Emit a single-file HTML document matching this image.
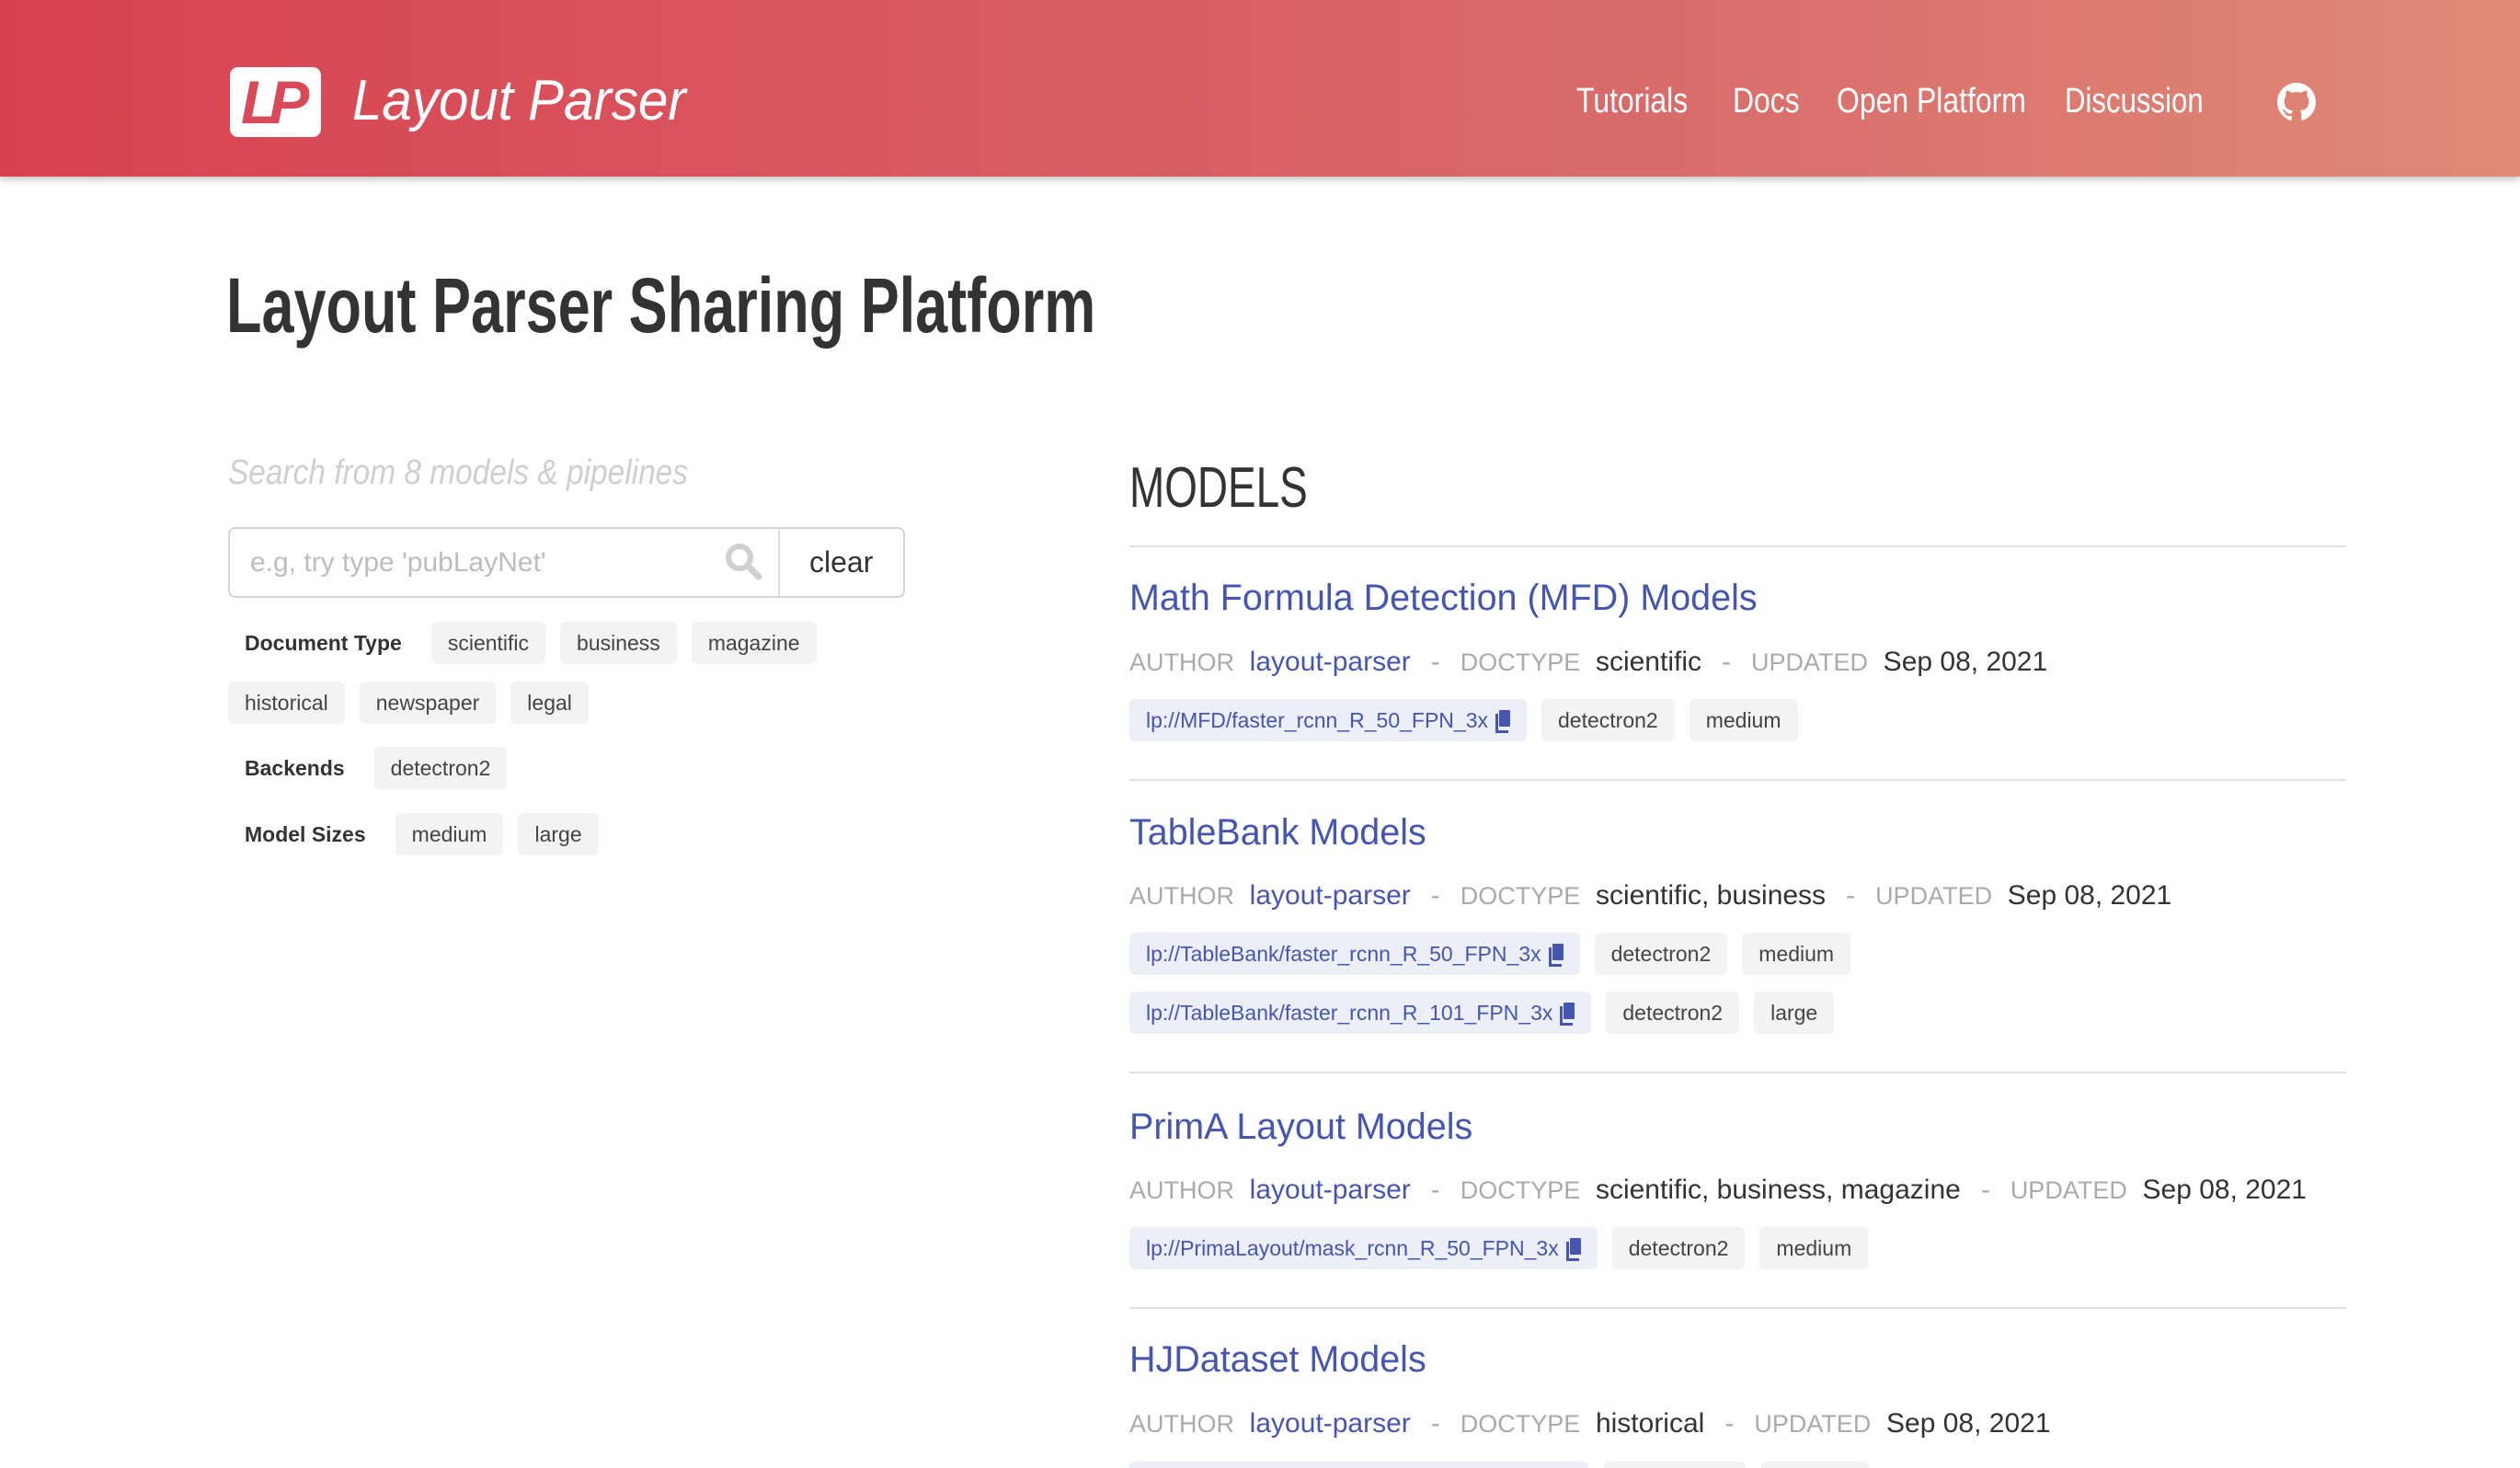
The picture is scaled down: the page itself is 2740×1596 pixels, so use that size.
<!DOCTYPE html>
<html><head><meta charset="utf-8">
<style>
*{margin:0;padding:0;box-sizing:border-box}
html,body{width:2740px;height:1596px;overflow:hidden;background:#fff;font-family:"Liberation Sans",sans-serif;position:relative}
.a{position:absolute;white-space:nowrap}
.hdr{position:absolute;left:0;top:0;width:2740px;height:192px;background:linear-gradient(90deg,#d7424f 0%,#d9525b 25%,#d86b6a 65%,#e08a77 100%);box-shadow:0 3px 8px rgba(0,0,0,.25)}
.sx{display:inline-block;transform-origin:0 50%}
.nav{color:#fff;font-size:38px;line-height:44px;top:88px}
.pill{display:inline-flex;align-items:center;height:46px;padding:0 18px;background:#f3f3f3;border-radius:6px;color:#444;font-size:23px;margin-right:16px}
.row{position:absolute;display:flex;align-items:center;white-space:nowrap}
.lbl{font-weight:bold;font-size:23px;color:#333;margin-left:18px;margin-right:32px}
.title{color:#4656b0;font-size:39.5px;line-height:46px}
.meta{font-size:30px;line-height:36px;color:#333}
.meta .k{color:#aaa;font-size:27px}
.meta .b{color:#4656b0}
.meta .d{color:#aaa;margin:0 22px}
.bp{background:#eceff8;color:#4656b0}
.cp{display:inline-block;width:16px;height:22px;margin-left:8px;position:relative}
.cp:before{content:"";position:absolute;left:0;top:4px;width:11px;height:18px;border:3px solid #4656b0;border-right:none;border-top:none}
.cp:after{content:"";position:absolute;left:4px;top:0;width:12px;height:18px;background:#4656b0;border-radius:1px}
.hr{position:absolute;left:1228px;width:1323px;height:2px;background:#e2e2e2}
</style></head><body>
<div class="hdr"></div>
<div class="a" style="left:250px;top:73px;width:99px;height:76px;background:#fff;border-radius:9px"></div>
<div class="a" style="left:262px;top:78px;font:italic bold 66px/66px 'Liberation Sans',sans-serif;color:#d8495a;letter-spacing:-10px">LP</div>
<div class="a" style="left:383px;top:72px;font:italic 62px/76px 'Liberation Sans',sans-serif;color:#fff"><span class="sx" style="transform:scaleX(.94)">Layout Parser</span></div>
<div class="a nav" style="left:1714px"><span class="sx" style="transform:scaleX(.84)">Tutorials</span></div>
<div class="a nav" style="left:1884px"><span class="sx" style="transform:scaleX(.84)">Docs</span></div>
<div class="a nav" style="left:1997px"><span class="sx" style="transform:scaleX(.84)">Open Platform</span></div>
<div class="a nav" style="left:2245px"><span class="sx" style="transform:scaleX(.82)">Discussion</span></div>
<svg class="a" style="left:2476px;top:90px" width="42" height="42" viewBox="0 0 16 16"><path fill="#fff" d="M8 0C3.58 0 0 3.58 0 8c0 3.54 2.29 6.53 5.47 7.590.4.07.55-.17.55-.38 0-.19-.01-.82-.01-1.49-2.01.37-2.53-.49-2.69-.94-.09-.23-.48-.94-.82-1.13-.28-.15-.68-.52-.01-.53.63-.01 1.08.58 1.23.82.72 1.21 1.87.87 2.33.66.07-.52.28-.87.51-1.07-1.78-.2-3.64-.89-3.64-3.95 0-.87.31-1.59.82-2.15-.08-.2-.36-1.02.08-2.12 0 0 .67-.21 2.2.82.64-.18 1.32-.27 2-.27.68 0 1.36.09 2 .27 1.53-1.04 2.2-.82 2.2-.82.44 1.1.16 1.92.08 2.12.51.56.82 1.27.82 2.15 0 3.07-1.87 3.75-3.65 3.95.29.25.54.73.54 1.48 0 1.07-.01 1.93-.01 2.2 0 .21.15.46.55.38A8.013 8.013 0 0016 8c0-4.42-3.58-8-8-8z"/></svg>

<div class="a" style="left:246px;top:284px;font:bold 84px/96px 'Liberation Sans',sans-serif;color:#333"><span class="sx" style="transform:scaleX(.75)">Layout Parser Sharing Platform</span></div>

<div class="a" style="left:248px;top:490px;font:italic 38px/48px 'Liberation Sans',sans-serif;color:#cfcfcf"><span class="sx" style="transform:scaleX(.88)">Search from 8 models &amp; pipelines</span></div>
<div class="a" style="left:248px;top:573px;width:736px;height:77px;border:2px solid #d4d4d4;border-radius:8px"></div>
<div class="a" style="left:846px;top:574px;width:2px;height:75px;background:#ddd"></div>
<div class="a" style="left:272px;top:594px;font-size:30px;line-height:36px;color:#bdbdbd">e.g, try type 'pubLayNet'</div>
<svg class="a" style="left:787px;top:589px" width="44" height="44" viewBox="0 0 44 44"><circle cx="17" cy="17" r="12" fill="none" stroke="#d0d0d0" stroke-width="6"/><path d="M26 26L38 38" stroke="#d0d0d0" stroke-width="7" stroke-linecap="round"/></svg>
<div class="a" style="left:880px;top:592px;font-size:32px;line-height:38px;color:#333">clear</div>

<div class="row" style="left:248px;top:676px"><span class="lbl">Document Type</span><span class="pill">scientific</span><span class="pill">business</span><span class="pill">magazine</span></div>
<div class="row" style="left:248px;top:741px"><span class="pill">historical</span><span class="pill">newspaper</span><span class="pill">legal</span></div>
<div class="row" style="left:248px;top:812px"><span class="lbl">Backends</span><span class="pill">detectron2</span></div>
<div class="row" style="left:248px;top:884px"><span class="lbl">Model Sizes</span><span class="pill">medium</span><span class="pill">large</span></div>

<div class="a" style="left:1228px;top:496px;font-size:62px;line-height:70px;color:#333"><span class="sx" style="transform:scaleX(.74)">MODELS</span></div>
<div class="hr" style="top:593px"></div>

<div class="a title" style="left:1228px;top:627px">Math Formula Detection (MFD) Models</div>
<div class="a meta" style="left:1228px;top:702px"><span class="k">AUTHOR</span>&nbsp; <span class="b">layout-parser</span><span class="d">-</span><span class="k">DOCTYPE</span>&nbsp; scientific<span class="d">-</span><span class="k">UPDATED</span>&nbsp; Sep 08, 2021</div>
<div class="row" style="left:1228px;top:760px"><span class="pill bp">lp://MFD/faster_rcnn_R_50_FPN_3x<i class="cp"></i></span><span class="pill">detectron2</span><span class="pill">medium</span></div>
<div class="hr" style="top:847px"></div>

<div class="a title" style="left:1228px;top:882px">TableBank Models</div>
<div class="a meta" style="left:1228px;top:956px"><span class="k">AUTHOR</span>&nbsp; <span class="b">layout-parser</span><span class="d">-</span><span class="k">DOCTYPE</span>&nbsp; scientific, business<span class="d">-</span><span class="k">UPDATED</span>&nbsp; Sep 08, 2021</div>
<div class="row" style="left:1228px;top:1014px"><span class="pill bp">lp://TableBank/faster_rcnn_R_50_FPN_3x<i class="cp"></i></span><span class="pill">detectron2</span><span class="pill">medium</span></div>
<div class="row" style="left:1228px;top:1078px"><span class="pill bp">lp://TableBank/faster_rcnn_R_101_FPN_3x<i class="cp"></i></span><span class="pill">detectron2</span><span class="pill">large</span></div>
<div class="hr" style="top:1165px"></div>

<div class="a title" style="left:1228px;top:1202px">PrimA Layout Models</div>
<div class="a meta" style="left:1228px;top:1276px"><span class="k">AUTHOR</span>&nbsp; <span class="b">layout-parser</span><span class="d">-</span><span class="k">DOCTYPE</span>&nbsp; scientific, business, magazine<span class="d">-</span><span class="k">UPDATED</span>&nbsp; Sep 08, 2021</div>
<div class="row" style="left:1228px;top:1334px"><span class="pill bp">lp://PrimaLayout/mask_rcnn_R_50_FPN_3x<i class="cp"></i></span><span class="pill">detectron2</span><span class="pill">medium</span></div>
<div class="hr" style="top:1421px"></div>

<div class="a title" style="left:1228px;top:1455px">HJDataset Models</div>
<div class="a meta" style="left:1228px;top:1530px"><span class="k">AUTHOR</span>&nbsp; <span class="b">layout-parser</span><span class="d">-</span><span class="k">DOCTYPE</span>&nbsp; historical<span class="d">-</span><span class="k">UPDATED</span>&nbsp; Sep 08, 2021</div>
<div class="a" style="left:1228px;top:1589px;width:499px;height:20px;background:#eceff8;border-radius:6px"></div>
<div class="a" style="left:1744px;top:1589px;width:154px;height:20px;background:#f3f3f3;border-radius:6px"></div>
<div class="a" style="left:1915px;top:1589px;width:117px;height:20px;background:#f3f3f3;border-radius:6px"></div>
</body></html>
